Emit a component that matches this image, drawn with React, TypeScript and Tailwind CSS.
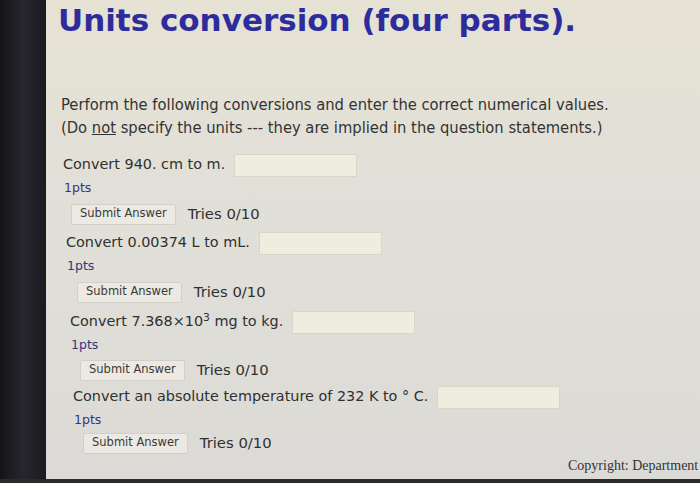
import React from 'react';

const sans = { fontFamily: '"DejaVu Sans", Verdana, sans-serif' };

interface Part {
  id: number;
  indent: string;
  btnIndent: string;
  gap: string;
  btnGap: string;
  question: React.ReactNode;
}

const parts: Part[] = [
  { id: 1, indent: 'ml-[5px]', btnIndent: 'ml-[8px]', gap: 'mt-[14px]', btnGap: 'mt-[6px]', question: <>Convert 940. cm to m.</> },
  { id: 2, indent: 'ml-[8px]', btnIndent: 'ml-[11px]', gap: 'mt-[6px]', btnGap: 'mt-[6px]', question: <>Convert 0.00374 L to mL.</> },
  {
    id: 3,
    indent: 'ml-[12px]',
    btnIndent: 'ml-[10px]',
    gap: 'mt-[7px]',
    btnGap: 'mt-[5px]',
    question: (
      <>
        Convert 7.368×10<sup>3</sup> mg to kg.
      </>
    ),
  },
  {
    id: 4,
    indent: 'ml-[15px]',
    btnIndent: 'ml-[10px]',
    gap: 'mt-[4px]',
    btnGap: 'mt-[3px]',
    question: <>Convert an absolute temperature of 232 K to ° C.</>,
  },
];

export default function App() {
  return (
    <div className="w-[700px] h-[483px] overflow-hidden flex flex-col bg-[#18181c]">
      <div className="flex h-[479px] min-w-0">
        <div className="w-[46px] shrink-0 bg-linear-to-r from-[#141418] via-[#26262c] to-[#1a1a1f]" />
        <div
          className="flex-1 min-w-0 overflow-hidden pl-[12px] bg-linear-to-b from-[#e6e2d4] via-[#e0dfd8] to-[#dbdad6] text-[#303030]"
          style={sans}
        >
          <h1 className="h-[40px] leading-[40px] text-[31px] font-bold text-[#2c2c9c] whitespace-nowrap">
            Units conversion (four parts).
          </h1>

          <p
            className="mt-[53px] ml-[3px] text-[16.4px] leading-[23px] text-[#333] whitespace-nowrap [font-stretch:condensed]"
            style={{ fontFamily: '"DejaVu Sans Condensed", "DejaVu Sans", sans-serif' }}
          >
            Perform the following conversions and enter the correct numerical values.
            <br />
            (Do <span className="underline">not</span> specify the units --- they are implied in the question statements.)
          </p>

          {parts.map((part) => (
            <div key={part.id} className={`${part.gap} ${part.indent}`}>
              <div className="flex items-center h-[24px]">
                <span className="text-[14.4px] whitespace-nowrap">{part.question}</span>
                <div className="ml-[9px] w-[123px] h-[23px] bg-[#efeddf] border border-[#d8d6c4]" />
              </div>
              <div className="mt-[2px] ml-[1px] h-[18px] leading-[18px] text-[12.5px] text-[#35357a]">1pts</div>
              <div className={`${part.btnGap} flex items-center h-[22px] ${part.btnIndent}`}>
                <button className="h-[21px] px-[8px] text-[11.5px] text-[#3a3a3a] bg-[#ebe9e1] border border-[#d2d0c6] rounded-[2px] whitespace-nowrap">
                  Submit Answer
                </button>
                <span className="ml-[12px] text-[14.8px] whitespace-nowrap">Tries 0/10</span>
              </div>
            </div>
          ))}

          <div
            className="mt-[3px] ml-[510px] text-[14px] leading-[18px] whitespace-nowrap text-[#333]"
            style={{ fontFamily: '"Liberation Serif", "Times New Roman", serif' }}
          >
            Copyright: Department
          </div>
        </div>
      </div>
      <div className="h-[4px] bg-[#2a2a2e]" />
    </div>
  );
}
